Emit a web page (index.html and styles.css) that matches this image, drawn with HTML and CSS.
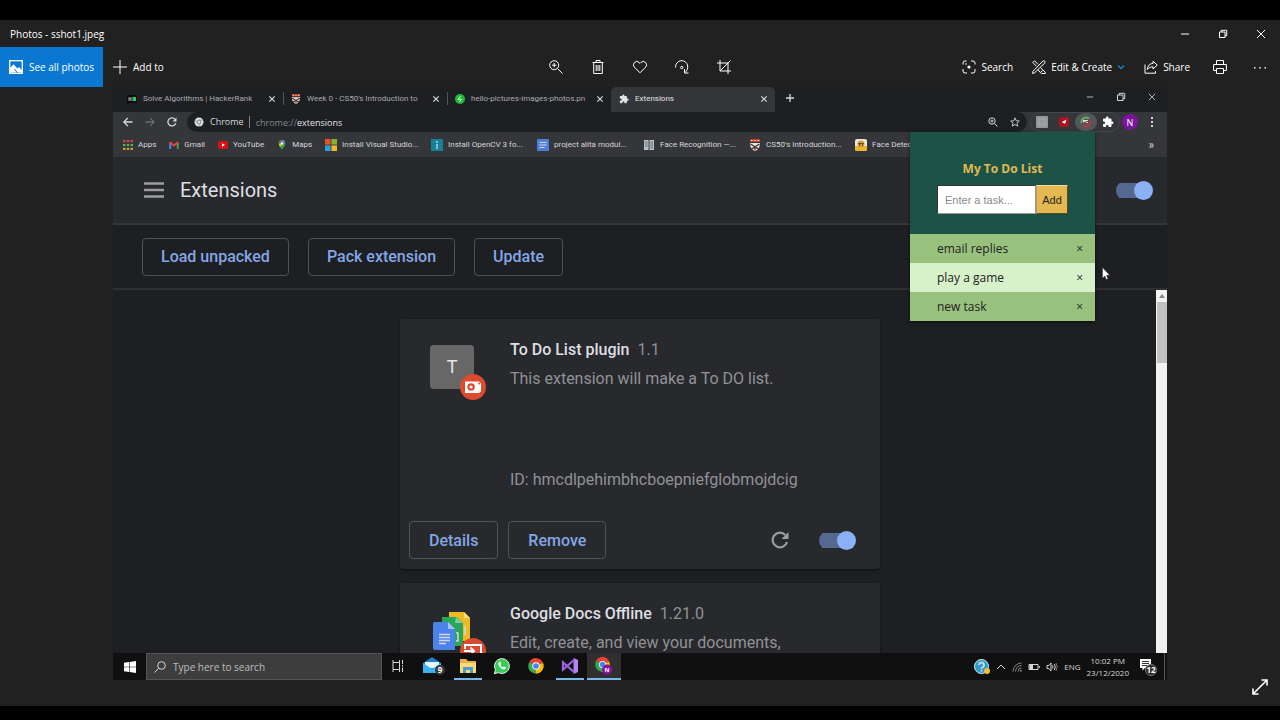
FILE: index.html
```html
<!DOCTYPE html>
<html lang="en">

<head>
    <meta charset="UTF-8">
    <meta name="viewport" content="width=device-width, initial-scale=1.0">
    <link rel="stylesheet" href="styles.css">
    <title>Photos - sshot1.jpeg</title>
</head>

<body>
    <!-- shared icons -->
    <svg class="defs" aria-hidden="true">
        <symbol id="i-min" viewBox="0 0 10 10"><path d="M1 5h8" /></symbol>
        <symbol id="i-max" viewBox="0 0 10 10"><path d="M1.500 3h5.500v5.500H1.500zM3.200 3V1.300h5.500v5.500H7" /></symbol>
        <symbol id="i-close" viewBox="0 0 10 10"><path d="M1 1l8 8M9 1L1 9" /></symbol>
        <symbol id="i-x" viewBox="0 0 10 10"><path d="M2.300 2.300l5.400 5.400M7.700 2.300L2.300 7.700" stroke-width="1.200" /></symbol>
        <symbol id="i-puzzle" viewBox="0 0 24 24"><path fill="currentColor" stroke="none" d="M20.500 11H19V7a2 2 0 0 0-2-2h-4V3.500a2.500 2.500 0 0 0-5 0V5H4a2 2 0 0 0-2 2v3.800h1.500a2.700 2.700 0 0 1 0 5.400H2V20a2 2 0 0 0 2 2h3.800v-1.500a2.700 2.700 0 0 1 5.400 0V22H17a2 2 0 0 0 2-2v-4h1.500a2.500 2.500 0 0 0 0-5z" /></symbol>
        <symbol id="i-chrome" viewBox="0 0 24 24">
            <path fill="#ea4335" stroke="none" d="M12 12L2 6a11.500 11.500 0 0 1 20.500 1z" />
            <path fill="#34a853" stroke="none" d="M12 12l-1 11.400A11.500 11.500 0 0 1 2 6z" />
            <path fill="#fbbc04" stroke="none" d="M12 12l10.400-5A11.500 11.500 0 0 1 11 23.400z" />
            <circle cx="12" cy="12" r="5.600" fill="#fff" stroke="none" /><circle cx="12" cy="12" r="4.300" fill="#4285f4" stroke="none" />
        </symbol>
        <symbol id="i-shield" viewBox="0 0 12 12">
            <g stroke="none"><path fill="#c2402f" d="M1 0h10v3H1z" /><path fill="#f1e6d0" d="M2 1h1.500v1H2zM5.200 1h1.500v1H5.200zM8.500 1H10v1H8.500z" />
            <path fill="#e8e4dc" d="M1 4h10c0 4-2 7-5 8-3-1-5-4-5-8z" /></g><path d="M1.500 5l8 5M10.500 5l-8 5" stroke="#33342f" stroke-width="1.300" /><path fill="#b5382f" stroke="none" d="M4.500 9h3L6 12z" />
        </symbol>
    </svg>

    <div class="photos">
        <header class="titlebar">
            <span>Photos - sshot1.jpeg</span>
            <div class="win-buttons">
                <button aria-label="Minimize"><svg class="ico10"><use href="#i-min" /></svg></button>
                <button aria-label="Restore"><svg class="ico10"><use href="#i-max" /></svg></button>
                <button aria-label="Close"><svg class="ico10"><use href="#i-close" /></svg></button>
            </div>
        </header>

        <div class="commands">
            <div class="commands-left">
                <button class="see-all">
                    <svg class="ico14" viewBox="0 0 14 14"><rect x=".7" y=".7" width="12.600" height="12.600" stroke-width="1.300" /><path fill="#fff" stroke="none" d="M1 12.500V8l3.500-3.800 4 4.400L10 7l3 3.300v2.200z" /><path d="M5.500 9l3 4" stroke="#0a78d0" /></svg>
                    See all photos
                </button>
                <button class="add-to">
                    <svg class="ico14" viewBox="0 0 14 14"><path d="M7 0v14M0 7h14" /></svg>
                    Add to
                </button>
            </div>
            <div class="commands-mid">
                <button aria-label="Zoom"><svg class="ico14" viewBox="0 0 14 14"><circle cx="5.200" cy="5.200" r="4.500" /><path d="M8.500 8.500l5 5M5.200 3v4.400M3 5.200h4.400" /></svg></button>
                <button aria-label="Delete"><svg class="ico14" viewBox="0 0 14 14"><path d="M1.500 2.500h11M5 2.500v-2h4v2M2.700 2.500v11h8.600v-11M5.200 5v6M7 5v6M8.800 5v6" /></svg></button>
                <button aria-label="Favorite"><svg class="ico14" viewBox="0 0 14 14"><path d="M7 12.800L1.400 7.200a3.400 3.400 0 0 1 0-4.700 3.300 3.300 0 0 1 4.700 0l.9.900.9-.9a3.300 3.300 0 0 1 4.700 0 3.400 3.400 0 0 1 0 4.700z" /></svg></button>
                <button aria-label="Rotate"><svg class="ico14" viewBox="0 0 14 14"><path d="M.6 7.500A6 6 0 0 1 12.700 6c.3 2.500-.6 4.700-2.700 6.500M9.500 9v4h4" /><circle cx="6.800" cy="7.500" r="1.200" /></svg></button>
                <button aria-label="Crop"><svg class="ico14" viewBox="0 0 14 14"><path d="M0 3h11v11M3 0v11h11M13.500.5L3 11" /></svg></button>
            </div>
            <div class="commands-right">
                <button class="cmd">
                    <svg class="ico14" viewBox="0 0 14 14"><path d="M1 4.500V3a2 2 0 0 1 2-2h1.500M9 1h2a2 2 0 0 1 2 2v1.500M13 9v2a2 2 0 0 1-2 2H9M5 13H3a2 2 0 0 1-2-2V9" /><circle cx="7" cy="7" r="1.600" fill="#fff" stroke="none" /><circle cx="4" cy="4" r=".8" fill="#fff" stroke="none" /></svg>
                    Search
                </button>
                <button class="cmd">
                    <svg class="ico14" viewBox="0 0 14 14"><path d="M.8 2.500L2.500.8l3.600 3.600M.8 2.500l3.600 3.700M8.500 7.800l4.800 4.500v1.200h-4L5.800 9.600M11.200.8c1.500-.2 2.200.8 1.700 2.100L4.500 11 2 13.200.6 13.400l.3-2zM10.500 10.500l-1.500 1.500" /></svg>
                    Edit &amp; Create
                    <svg class="ico8 blue" viewBox="0 0 8 8"><path d="M1 2.500l3 3 3-3" stroke-width="1.300" /></svg>
                </button>
                <button class="cmd">
                    <svg class="ico14" viewBox="0 0 14 14"><path d="M1 4.500v8.700h10.500v-2M9 1.200l4.300 3.900L9 9V6.800c-2.500 0-4.300.8-5.700 2.700C3.500 6 5.500 3.600 9 3.400z" /></svg>
                    Share
                </button>
                <button class="cmd-icon" aria-label="Print"><svg class="ico14" viewBox="0 0 14 14"><path d="M3.500 4.500v-4h7v4M3.500 10.500H.6v-6h12.800v6h-2.900M3.500 8.500h7v5h-7z" /></svg></button>
                <button class="cmd-icon" aria-label="See more"><svg class="ico14" viewBox="0 0 14 14"><path fill="#fff" stroke="none" d="M1 7h1.400v1.400H1zM6.300 7h1.400v1.400H6.300zM11.600 7H13v1.400h-1.400z" /></svg></button>
            </div>
        </div>

        <main class="viewer">
            <div class="desktop">
                <div class="tabs">
                    <div class="tab">
                        <svg class="ico10" viewBox="0 0 10 10"><path fill="#0a0d0e" stroke="none" d="M0 1h10v8H0z" /><path d="M2 3v4M4 3v4M2 5h2" /><path fill="#2ec866" stroke="none" d="M5.500 3H9v4H5.500z" /></svg>
                        <span>Solve Algorithms | HackerRank</span>
                        <button aria-label="Close tab"><svg class="ico10"><use href="#i-x" /></svg></button>
                    </div>
                    <div class="tab line">
                        <svg class="ico10"><use href="#i-shield" /></svg>
                        <span>Week 0 - CS50's Introduction to</span>
                        <button aria-label="Close tab"><svg class="ico10"><use href="#i-x" /></svg></button>
                    </div>
                    <div class="tab line">
                        <svg class="ico10" viewBox="0 0 10 10"><circle cx="5" cy="5" r="5" fill="#21ba3c" stroke="none" /><path d="M5.500 2L3 5.300h3.500L4.500 8" stroke="#d8ffd8" /></svg>
                        <span>hello-pictures-images-photos.pn</span>
                        <button aria-label="Close tab"><svg class="ico10"><use href="#i-x" /></svg></button>
                    </div>
                    <div class="tab active">
                        <svg class="ico10"><use href="#i-puzzle" /></svg>
                        <span>Extensions</span>
                        <button aria-label="Close tab"><svg class="ico10"><use href="#i-x" /></svg></button>
                    </div>
                    <button class="new-tab" aria-label="New tab"><svg class="ico10" viewBox="0 0 10 10"><path d="M5 1v8M1 5h8" stroke-width="1.300" /></svg></button>
                    <div class="win-buttons small">
                        <button aria-label="Minimize"><svg class="ico8"><use href="#i-min" /></svg></button>
                        <button aria-label="Restore"><svg class="ico10"><use href="#i-max" /></svg></button>
                        <button aria-label="Close"><svg class="ico8"><use href="#i-close" /></svg></button>
                    </div>
                </div>

                <div class="toolbar">
                    <button aria-label="Back"><svg class="ico10" viewBox="0 0 10 10"><path d="M9.500 5H1M4.800 1L.9 5l3.900 4" stroke-width="1.300" /></svg></button>
                    <button class="dim" aria-label="Forward"><svg class="ico10" viewBox="0 0 10 10"><path d="M.5 5H9M5.200 1l3.900 4-3.900 4" /></svg></button>
                    <button aria-label="Reload"><svg class="ico10" viewBox="0 0 10 10"><path d="M8.700 6.200A4 4 0 1 1 8 2.300" stroke-width="1.300" /><path fill="currentColor" stroke="none" d="M9.500.5v4h-4z" /></svg></button>
                    <div class="omnibox">
                        <svg class="ico10" viewBox="0 0 10 10"><circle cx="5" cy="5" r="4.500" fill="#dfe1e5" stroke="none" /><circle cx="5" cy="5" r="1.900" stroke="#77787c" stroke-width=".8" /><path d="M5 3.100h3.800M3.300 6L1.500 3M6.700 6L5 9.300" stroke="#77787c" stroke-width=".6" /></svg>
                        <span class="origin">Chrome</span>
                        <span class="url">chrome://<b>extensions</b></span>
                        <svg class="ico10" viewBox="0 0 10 10"><circle cx="4" cy="4" r="3.200" /><path d="M6.500 6.500l3 3M4 2.500v3M2.500 4h3" /></svg>
                        <svg class="ico10" viewBox="0 0 10 10"><path d="M5 .8l1.200 2.900 3.100.3L7 6.100l.7 3L5 7.500 2.300 9.100l.7-3L.7 4l3.100-.3z" stroke-width=".9" /></svg>
                    </div>
                    <div class="ext-icons">
                        <button aria-label="Extension"><svg class="ico12" viewBox="0 0 12 12"><rect width="12" height="12" rx="1" fill="#96979a" stroke="none" /><path d="M3 3h6v6H3z" stroke="#aaabad" /></svg></button>
                        <button aria-label="Extension"><svg class="ico12" viewBox="0 0 12 12"><rect x="1" y="1" width="10" height="10" rx="2" fill="#ae1220" stroke="none" /><path fill="#fff" stroke="none" d="M8.500 3.500L7 8 6 7 4.500 6.800 4 6z" /></svg></button>
                        <button class="on" aria-label="To Do List plugin"><svg class="ico12" viewBox="0 0 12 12"><path d="M1.500 7A4.700 4.700 0 0 1 9 2.500" stroke="#55b562" stroke-width="2" /><path d="M3 10c4 1.500 8-1 7.500-5" stroke="#b43b42" stroke-width="2" /><path fill="#dbd8d6" stroke="none" d="M3 4h5v3H3z" /><path d="M3 7l6-2" stroke="#7d3333" /></svg></button>
                        <button class="white" aria-label="Extensions"><svg class="ico12"><use href="#i-puzzle" /></svg></button>
                    </div>
                    <button class="avatar">N</button>
                    <button aria-label="Menu"><svg class="ico12" viewBox="0 0 12 12"><path fill="currentColor" stroke="none" d="M5 1h2v2H5zM5 5h2v2H5zM5 9h2v2H5z" /></svg></button>
                </div>

                <nav class="bookmarks">
                    <a href="#"><svg class="ico10" viewBox="0 0 10 10"><path d="M0 1.200h10" stroke="#d9483b" stroke-width="2.200" stroke-dasharray="2.400 1.400" /><path d="M0 5h10" stroke="#5fae5b" stroke-width="2.200" stroke-dasharray="2.400 1.400" /><path d="M0 8.800h10" stroke="#c9a53a" stroke-width="2.200" stroke-dasharray="2.400 1.400" /></svg>Apps</a>
                    <a href="#"><svg class="ico10" viewBox="0 0 10 10"><path d="M1.200 9V2.500" stroke="#4285f4" stroke-width="2" /><path d="M8.800 9V2.500" stroke="#34a853" stroke-width="2" /><path d="M.8 2.200L5 5.500l4.200-3.300" stroke="#ea4335" stroke-width="2" /></svg>Gmail</a>
                    <a href="#"><svg class="ico10" viewBox="0 0 10 10"><rect y="1" width="10" height="8" rx="2" fill="#d80f14" stroke="none" /><path fill="#fff" stroke="none" d="M4 3.300L7 5 4 6.700z" /></svg>YouTube</a>
                    <a href="#"><svg class="ico10" viewBox="0 0 10 10"><path fill="#34a853" stroke="none" d="M5 10C4.500 7.500 1.700 6.500 1.700 3.400a3.300 3.300 0 0 1 6.600 0C8.300 6.500 5.500 7.500 5 10z" /><path fill="#4285f4" stroke="none" d="M5 .1a3.300 3.300 0 0 1 3.100 2.200L5 4z" /><path fill="#ea4335" stroke="none" d="M5 .1L2 2l1.500 2z" /><path fill="#fbbc04" stroke="none" d="M1.900 4.500L4 3l1 2-2 2z" /><circle cx="5" cy="3.400" r="1.200" fill="#fff" stroke="none" /></svg>Maps</a>
                    <a class="long" href="#"><svg class="ico12" viewBox="0 0 12 12"><g stroke="none"><path fill="#e8502c" d="M0 0h5.600v5.600H0z" /><path fill="#7fb526" d="M6.400 0H12v5.600H6.400z" /><path fill="#2b9fe0" d="M0 6.400h5.600V12H0z" /><path fill="#f4b728" d="M6.400 6.400H12V12H6.400z" /></g></svg>Install Visual Studio...</a>
                    <a class="long" href="#"><svg class="ico12" viewBox="0 0 12 12"><path fill="#168099" stroke="none" d="M0 0h12v12H0z" /><path d="M6 2v2M6 5v5" stroke="#a7dbe5" stroke-width="1.500" /></svg>Install OpenCV 3 fo...</a>
                    <a class="long" href="#"><svg class="ico12" viewBox="0 0 12 12"><rect width="12" height="12" rx="1" fill="#4a80dc" stroke="none" /><path d="M2.500 3.500h7M2.500 6h7M2.500 8.500h5" stroke-width="1.200" /></svg>project alita modul...</a>
                    <a class="long" href="#"><svg class="ico12" viewBox="0 0 12 12"><path fill="#b9c3c5" stroke="none" d="M1 1h4.500v10H1zM6.500 1H11v10H6.500z" /><path d="M2 3h2.500M2 5h2.500M2 7h2.500M7.500 3h2.500M7.500 5h2.500M7.500 7h2.500M7.500 9h2.500" stroke="#52666d" /></svg>Face Recognition —...</a>
                    <a class="long" href="#"><svg class="ico12"><use href="#i-shield" /></svg>CS50's Introduction...</a>
                    <a class="long" href="#"><svg class="ico12" viewBox="0 0 12 12"><rect width="12" height="12" rx="2" fill="#ece7dc" stroke="none" /><path fill="#edb72b" stroke="none" d="M0 7h12v3a2 2 0 0 1-2 2H2a2 2 0 0 1-2-2z" /><circle cx="6" cy="5" r="3.500" fill="#d39c3b" stroke="none" /><path d="M3 4.500h6M4.500 5v2M7.500 5v2" stroke="#6d4c20" /></svg>Face Detec</a>
                    <button aria-label="More bookmarks">»</button>
                </nav>

                <div class="page-head">
                    <button aria-label="Main menu"><svg class="menu" viewBox="0 0 20 16"><path d="M0 1.500h20M0 8h20M0 14.500h20" stroke-width="2.400" /></svg></button>
                    <h1>Extensions</h1>
                    <input class="toggle" type="checkbox" aria-label="Developer mode" checked>
                </div>
                <div class="dev-bar">
                    <button class="outlined">Load unpacked</button>
                    <button class="outlined">Pack extension</button>
                    <button class="outlined">Update</button>
                </div>

                <div class="page">
                    <div class="cards">
                        <section class="card">
                            <div class="card-body">
                                <div class="card-icon">
                                    <div class="letter">T</div>
                                    <svg class="badge" viewBox="0 0 26 26"><circle cx="13" cy="13" r="13" fill="#dd4b2e" stroke="none" /><path fill="#fff" stroke="none" d="M5 7.500h14l2 2v8l-2 1.500H5z" /><circle cx="11" cy="13" r="2.700" stroke="#dd4b2e" stroke-width="2.200" /><circle cx="19" cy="9.500" r="1" fill="#dd4b2e" stroke="none" /></svg>
                                </div>
                                <div class="card-text">
                                    <h2>To Do List plugin <span>1.1</span></h2>
                                    <p>This extension will make a To DO list.</p>
                                    <p class="ext-id">ID: hmcdlpehimbhcboepniefglobmojdcig</p>
                                </div>
                            </div>
                            <div class="card-foot">
                                <button class="outlined">Details</button>
                                <button class="outlined">Remove</button>
                                <button class="reload" aria-label="Reload"><svg class="ico18" viewBox="0 0 18 18"><path d="M16 11A7.300 7.300 0 1 1 14.300 4" stroke-width="2.200" /><path fill="currentColor" stroke="none" d="M17.500 1v7h-7z" /></svg></button>
                                <input class="toggle" type="checkbox" aria-label="Enable To Do List plugin" checked>
                            </div>
                        </section>
                        <section class="card">
                            <div class="card-body">
                                <div class="card-icon">
                                    <svg class="docs" viewBox="0 0 44 44"><g stroke="none"><path fill="#edbb22" d="M19 3h15l6 6v23H19z" /><path fill="#f8dd83" d="M34 3v6h6z" /><path fill="#28a75b" d="M12 8h15l6 6v23H12z" /><path fill="#83cca0" d="M26 8l-1 6h8z" /><path fill="#4b83ec" d="M5 13h13l7 7v21H5a2 2 0 0 1-2-2V15a2 2 0 0 1 2-2z" /><path fill="#a6c3f8" d="M18 13v7h7z" /></g><path d="M9 25.500h11M9 28.500h11M9 31.500h11M9 34.500h7" stroke-width="1.600" /><path d="M26 24h2v8h-2M34 18h1v7h-1" stroke-width="1.500" /></svg>
                                    <svg class="badge" viewBox="0 0 26 26"><circle cx="13" cy="13" r="13" fill="#d84a31" stroke="none" /><path d="M5 11V7h16v12H5v-4M4 13h9M10.500 9.500L14 13l-3.500 3.500" stroke="#fff" stroke-width="2" /></svg>
                                </div>
                                <div class="card-text">
                                    <h2>Google Docs Offline <span>1.21.0</span></h2>
                                    <p>Edit, create, and view your documents,</p>
                                </div>
                            </div>
                        </section>
                    </div>
                    <div class="scrollbar"><i class="arrow up"></i><i class="thumb"></i><i class="arrow down"></i></div>
                </div>

                <footer class="taskbar">
                    <button class="start" aria-label="Start"><svg class="ico12" viewBox="0 0 12 12"><path fill="#fff" stroke="none" d="M0 1.700L5 1v4.700H0zM5.600.9L12 0v5.700H5.600zM0 6.300h5V11l-5-.7zM5.600 6.300H12V12l-6.400-.9z" /></svg></button>
                    <label class="search">
                        <svg class="ico12" viewBox="0 0 12 12"><circle cx="7.500" cy="4.500" r="3.800" /><path d="M4.800 7.200L.5 11.500" /></svg>
                        <input type="text" placeholder="Type here to search" aria-label="Type here to search">
                    </label>
                    <div class="apps">
                        <button aria-label="Task view"><svg class="ico12" viewBox="0 0 12 12"><path d="M1 0v2.500h6.500V0M1 12V9.500h6.500V12M1 2.500v7M7.500 2.500v7M10.500 0v4M10.500 7.500V12M10.500 5v1.500" /></svg></button>
                        <button aria-label="Mail"><svg class="ico22" viewBox="0 0 22 22"><g stroke="none"><path fill="#1b80c8" d="M0 8l9-6 9 6v10H0z" /><path fill="#eaf5fc" d="M2 7h14v6H2z" /><path fill="#39b2ee" d="M0 8l9 6 9-6v10H0z" /><circle cx="17" cy="15" r="5" fill="#393b3d" /></g><text x="17" y="18" class="count">9</text></svg></button>
                        <button class="open" aria-label="File Explorer"><svg class="ico18" viewBox="0 0 18 18"><g stroke="none"><path fill="#e8b04a" d="M1 2h6l2 2h8v5H1z" /><path fill="#f9d978" d="M1 6h16v10H1z" /><path fill="#4a9bd0" d="M4 10h10v6h-3v-3H7v3H4z" /></g></svg></button>
                        <button aria-label="WhatsApp"><svg class="ico18" viewBox="0 0 18 18"><path fill="#3bc957" d="M1.300 16.700l1.200-4A7.400 7.400 0 1 1 5.500 15.600z" stroke="#e8f8ea" /><path fill="#fff" stroke="none" d="M6.300 4.700c-2.300 1.800-.1 5 2.300 6.700 2.700 1.800 4.300.6 4.300-.9l-2-1-1 1.100c-1.200-.5-2-1.300-2.600-2.500l.9-1.100-.8-2.200z" /></svg></button>
                        <button aria-label="Chrome"><svg class="ico16"><use href="#i-chrome" /></svg></button>
                        <button class="open" aria-label="Visual Studio"><svg class="ico18" viewBox="0 0 18 18"><path fill="#b684f2" stroke="none" d="M12.500 1L17 3v12l-4.500 2z" /><path d="M13 3L2 12.500V5.500L13 15" stroke="#9a62dd" stroke-width="2.200" /></svg></button>
                        <button class="open current" aria-label="Chrome, N"><svg class="ico18" viewBox="0 0 18 18"><use href="#i-chrome" width="15" height="15" /><circle cx="12" cy="12.500" r="5" fill="#8813a5" stroke="none" /><text x="12" y="15" class="count small">N</text></svg></button>
                    </div>
                    <div class="tray">
                        <svg class="ico16" viewBox="0 0 16 16"><circle cx="7.500" cy="7.500" r="7" fill="#2a9ccc" stroke="#d9eef7" /><path d="M5 6a2.500 2.500 0 1 1 3.500 2.300c-.7.400-1 .7-1 1.700M7.500 11v1.500" stroke-width="1.800" /><circle cx="13" cy="12" r="3" fill="#f2bc40" stroke="none" /></svg>
                        <svg class="ico10" viewBox="0 0 10 10"><path d="M1 7l4-4 4 4" /></svg>
                        <svg class="ico10 gray" viewBox="0 0 10 10"><path d="M1 9.500A8.500 8.500 0 0 1 9.500 1M3.500 9.500a6 6 0 0 1 6-6M6 9.500A3.500 3.500 0 0 1 9.500 6" /><circle cx="8.800" cy="8.800" r="1" fill="currentColor" stroke="none" /></svg>
                        <svg class="ico12" viewBox="0 0 12 12"><path d="M1 3.500h9v5H1zM11.300 5v2" /><path fill="currentColor" stroke="none" d="M1.500 4H5v4H1.500z" /></svg>
                        <svg class="ico12" viewBox="0 0 12 12"><path d="M1 4.500h2L5 2v8L3 7.500H1zM6.500 4.500q1 1.500 0 3M8.300 3q2 3 0 6" /><path d="M10 2q2.500 4 0 8" stroke="#777" /></svg>
                        <span class="lang">ENG</span>
                        <time>10:02 PM<br>23/12/2020</time>
                        <svg class="notes" viewBox="0 0 20 18"><path fill="#fff" stroke="none" d="M1 1h11v9H6l-2.500 2.500V10H1z" /><path d="M3 3.500h7M3 5.500h7M3 7.500h5" stroke="#333" /><circle cx="12" cy="12" r="5.500" fill="#2c2c2c" stroke="#777" /><text x="12" y="15" class="count">12</text></svg>
                    </div>
                </footer>

                <!-- extension popup, opens over the page -->
                <div class="popup">
                    <form class="popup-head">
                        <h3>My To Do List</h3>
                        <div class="row">
                            <input type="text" placeholder="Enter a task..." aria-label="Task">
                            <button type="button">Add</button>
                        </div>
                    </form>
                    <ul>
                        <li>email replies <button aria-label="Remove email replies">×</button></li>
                        <li>play a game <button aria-label="Remove play a game">×</button></li>
                        <li>new task <button aria-label="Remove new task">×</button></li>
                    </ul>
                </div>
                <svg class="cursor" viewBox="0 0 8 13"><path fill="#fff" stroke="#222" stroke-width=".4" d="M.5.5v10.800L2.800 9l1.500 3.500 1.700-.7L4.500 8.300h3.200z" /></svg>
            </div>

            <button class="fullscreen" aria-label="Full screen"><svg class="ico16" viewBox="0 0 16 16"><path d="M1 15L15 1M9.500 1H15v5.500M1 9.500V15h5.500" stroke-width="1.600" /></svg></button>
        </main>
    </div>
</body>

</html>
```
FILE: styles.css
```css
* {
    box-sizing: border-box;
    margin: 0;
    padding: 0;
}

body {
    display: flex;
    height: 100vh;
    padding: 20px 0 14px;
    background: #000;
    color: #fff;
    font-family: "Open Sans", "Noto Sans", sans-serif;
    font-size: 10px;
}

button {
    display: flex;
    align-items: center;
    justify-content: center;
    border: 0;
    background: none;
    color: inherit;
    font: inherit;
    white-space: nowrap;
}

svg {
    display: block;
    flex: none;
    fill: none;
    stroke: currentColor;
}

.defs {
    position: absolute;
    width: 0;
    height: 0;
}

.ico8 { width: 8px; height: 8px; }
.ico10 { width: 10px; height: 10px; }
.ico12 { width: 12px; height: 12px; }
.ico14 { width: 14px; height: 14px; }
.ico16 { width: 16px; height: 16px; }
.ico18 { width: 18px; height: 18px; }
.ico22 { width: 22px; height: 22px; }
.blue { color: #1a86d9; }
.gray { color: #888; }

.count {
    fill: #fff;
    stroke: none;
    font-size: 8px;
    font-weight: bold;
    text-anchor: middle;
}

.count.small {
    font-size: 6px;
}

/* photos window */
.photos {
    display: flex;
    flex: 1;
    flex-direction: column;
    min-width: 0;
    background: #212121;
}

.titlebar {
    display: flex;
    align-items: center;
    justify-content: space-between;
    height: 27px;
    padding-left: 10px;
}

.win-buttons {
    display: flex;
}

.win-buttons button {
    width: 38px;
    height: 27px;
}

.win-buttons.small {
    margin-left: auto;
}

.win-buttons.small button {
    width: 31px;
    height: 20px;
}

.commands {
    display: grid;
    grid-template-columns: 1fr auto 1fr;
    height: 40px;
}

.commands-left,
.commands-mid,
.commands-right {
    display: flex;
    align-items: stretch;
}

.commands-right {
    justify-content: flex-end;
}

.see-all {
    gap: 6px;
    width: 103px;
    background: #0a78d0;
}

.add-to {
    gap: 6px;
    padding: 0 10px;
}

.commands-mid button {
    width: 42px;
}

.cmd {
    gap: 5px;
    padding: 0 10px 0 9px;
}

.cmd-icon {
    width: 40px;
}

.viewer {
    display: flex;
    position: relative;
    flex: 1;
    min-height: 0;
    padding: 0 113px 26px;
}

.fullscreen {
    position: absolute;
    right: 12px;
    bottom: 11px;
}

/* browser in the photo */
.desktop {
    display: flex;
    position: relative;
    flex: 1;
    flex-direction: column;
    min-width: 0;
    background: #1e1f23;
    color: #d6d7da;
}

.tabs {
    display: flex;
    flex: none;
    height: 25px;
    padding-left: 6px;
    font-family: Roboto, "Open Sans", sans-serif;
    font-size: 8px;
}

.tab {
    display: flex;
    align-items: center;
    width: 164px;
    padding: 0 6px 2px 8px;
    color: #aaabad;
}

.tab span {
    flex: 1;
    margin: 0 2px 0 6px;
    overflow: hidden;
    white-space: nowrap;
}

.tab button {
    color: #d6d7da;
}

.tab.line {
    background: linear-gradient(#55565a, #55565a) 0 5px / 1px 13px no-repeat;
}

.tab.active {
    border-radius: 5px 5px 0 0;
    background: #35363a;
    color: #e2e3e5;
}

.new-tab {
    width: 30px;
    height: 22px;
}

.toolbar {
    display: flex;
    flex: none;
    align-items: center;
    height: 20px;
    padding: 0 4px;
    background: #35363a;
    font-size: 9px;
}

.toolbar > button {
    width: 22px;
}

.toolbar .dim {
    color: #85868a;
}

.omnibox {
    display: flex;
    flex: 1;
    align-items: center;
    gap: 12px;
    height: 20px;
    margin: 0 3px 0 4px;
    padding: 0 7px;
    border-radius: 10px;
    background: #1e1f23;
}

.origin {
    margin-left: -6px;
    padding-right: 5px;
    border-right: 1px solid #85868a;
    line-height: 12px;
}

.url {
    flex: 1;
    margin-left: -6px;
    color: #85868a;
}

.url b {
    color: #e2e3e5;
    font-weight: normal;
}

.ext-icons {
    display: flex;
    border: 1px solid #45464a;
    border-radius: 10px;
}

.ext-icons button {
    width: 22px;
    height: 18px;
}

.ext-icons .on {
    border-radius: 9px;
    background: #55565a;
}

.ext-icons .white {
    color: #fff;
}

.toolbar > .avatar {
    width: 16px;
    height: 16px;
    margin: 0 3px 0 2px;
    border-radius: 8px;
    background: #7b159b;
    color: #fff;
}

.bookmarks {
    display: flex;
    flex: none;
    align-items: center;
    height: 25px;
    padding: 0 13px 0 10px;
    background: #35363a;
    font-family: Roboto, "Open Sans", sans-serif;
    font-size: 8px;
}

.bookmarks a {
    display: flex;
    align-items: center;
    gap: 5px;
    margin-right: 13px;
    color: inherit;
    text-decoration: none;
    white-space: nowrap;
}

.bookmarks .long {
    width: 106px;
    margin-right: 0;
}

.bookmarks button {
    margin-left: auto;
    font-size: 12px;
}

/* chrome://extensions */
.page-head,
.dev-bar,
.cards {
    font-family: Roboto, sans-serif;
}

.page-head {
    display: flex;
    flex: none;
    align-items: center;
    gap: 16px;
    height: 68px;
    padding: 0 14px 0 31px;
    border-bottom: 2px solid #35363a;
    background: #28292d;
}

.page-head button {
    color: #9c9da1;
}

.menu {
    width: 20px;
    height: 16px;
}

.page-head h1 {
    flex: 1;
    color: #dedfe2;
    font-size: 20px;
    font-weight: 400;
}

.toggle {
    display: grid;
    align-items: center;
    appearance: none;
    width: 37px;
    height: 19px;
    background: linear-gradient(#55688f, #55688f) 0 / 30px 15px no-repeat;
    border-radius: 10px;
}

.toggle::before {
    content: "";
    justify-self: end;
    width: 19px;
    height: 19px;
    border-radius: 50%;
    background: #8ab0f5;
}

.dev-bar {
    display: flex;
    flex: none;
    gap: 19px;
    align-items: center;
    height: 65px;
    padding: 0 29px;
    border-bottom: 2px solid #2f3034;
}

.outlined {
    height: 38px;
    padding: 0 19px;
    border: 1px solid #505156;
    border-radius: 4px;
    color: #84a6e6;
    font-size: 16px;
    font-weight: 500;
}

.dev-bar .outlined {
    padding: 0 18px;
}

.page {
    display: grid;
    flex: 1;
    grid-template-columns: 1fr minmax(0, 480px) 1fr;
    min-height: 0;
    overflow: hidden;
}

.cards {
    display: flex;
    grid-column: 2;
    flex-direction: column;
    gap: 14px;
    padding-top: 29px;
}

.card {
    display: flex;
    flex: none;
    flex-direction: column;
    height: 250px;
    border-radius: 4px;
    background: #28292d;
    box-shadow: 0 1px 3px rgba(0, 0, 0, .5);
}

.card-body {
    display: flex;
    flex: 1;
    gap: 35px;
    padding: 19px 30px 0;
}

.card-icon {
    position: relative;
    flex: none;
    width: 45px;
    padding-top: 7px;
}

.letter {
    width: 44px;
    height: 44px;
    border-radius: 4px;
    background: #676767;
    color: #e8e8e8;
    font-size: 18px;
    line-height: 44px;
    text-align: center;
}

.docs {
    width: 44px;
    height: 44px;
}

.badge {
    position: absolute;
    top: 36px;
    right: -11px;
    width: 26px;
    height: 26px;
}

.card-text {
    display: flex;
    flex-direction: column;
    color: #919296;
    font-size: 16px;
    line-height: 24px;
}

.card-text h2 {
    color: #dedfe2;
    font-size: 16px;
    font-weight: 500;
}

.card-text h2 span {
    margin-left: 4px;
    color: #919296;
    font-weight: 400;
}

.card-text p {
    margin-top: 5px;
}

.card-text .ext-id {
    margin-top: 77px;
}

.card-foot {
    display: flex;
    align-items: center;
    gap: 10px;
    padding: 0 24px 10px 9px;
}

.reload {
    margin-right: 20px;
    margin-left: auto;
    color: #9c9da1;
}

.scrollbar {
    display: flex;
    grid-column: 3;
    flex-direction: column;
    align-items: center;
    justify-self: end;
    width: 11px;
    background: #f2f2f2;
}

.thumb {
    width: 10px;
    height: 61px;
    background: #c1c1c1;
}

.arrow {
    flex: none;
    width: 0;
    height: 4px;
    margin: 4px 0;
    border: 3px solid transparent;
}

.arrow.up {
    border-top: 0;
    border-bottom: 4px solid #888;
}

.arrow.down {
    margin-top: auto;
    border-top: 4px solid #444;
    border-bottom: 0;
}

/* windows taskbar */
.taskbar {
    display: flex;
    flex: none;
    height: 27px;
    background: #101010;
}

.start {
    width: 33px;
}

.search {
    display: flex;
    align-items: center;
    gap: 7px;
    width: 236px;
    padding: 0 7px;
    border: 1px solid #555;
    background: #3d3d3d;
}

.search input {
    flex: 1;
    min-width: 0;
    border: 0;
    background: none;
    font: inherit;
}

.search input::placeholder {
    color: #bdbdbd;
}

.apps {
    display: flex;
    gap: 6px;
    margin-left: 2px;
}

.apps button {
    width: 28px;
    border-bottom: 2px solid transparent;
}

.apps button:first-child {
    margin-right: 2px;
}

.apps .open {
    border-bottom-color: #76b9ed;
}

.apps .current {
    width: 34px;
    margin-left: -3px;
    background: #303030;
}

.tray {
    display: flex;
    align-items: center;
    gap: 6px;
    margin-left: auto;
    padding-right: 5px;
    border-right: 1px solid #555;
    margin-right: 2px;
}

.lang,
.tray time {
    font-size: 8px;
    line-height: 12px;
    text-align: center;
}

.notes {
    width: 20px;
    height: 18px;
    margin-left: 4px;
}

/* to do popup */
.popup {
    position: absolute;
    top: 45px;
    right: 72px;
    width: 185px;
    background: #1d5246;
    box-shadow: 0 1px 3px rgba(0, 0, 0, .6);
    color: #222;
    font-size: 12px;
}

.popup-head {
    padding: 28px 27px 20px;
}

.popup h3 {
    margin-bottom: 7px;
    color: #e0b953;
    font-size: 12px;
    line-height: 18px;
    text-align: center;
}

.row {
    display: flex;
    height: 29px;
}

.row input {
    flex: 1;
    min-width: 0;
    padding: 0 7px;
    border: 1px solid;
    border-color: #333 #999 #999 #333;
    background: #fff;
    font: 11px "Liberation Sans", Arial, sans-serif;
}

.row input::placeholder {
    color: #8a8a8a;
}

.row button {
    width: 32px;
    border: 1px solid;
    border-color: #eed9a0 #59491f #59491f #b39a60;
    background: #e5b951;
    color: #222;
    font: 11px "Liberation Sans", Arial, sans-serif;
}

.popup ul {
    list-style: none;
}

.popup li {
    display: flex;
    align-items: center;
    justify-content: space-between;
    height: 29px;
    padding: 0 12px 0 27px;
    background: #98c17e;
}

.popup li:nth-child(even) {
    background: #d7f1c8;
}

.cursor {
    position: absolute;
    top: 180px;
    right: 57px;
    width: 8px;
    height: 13px;
}
```
